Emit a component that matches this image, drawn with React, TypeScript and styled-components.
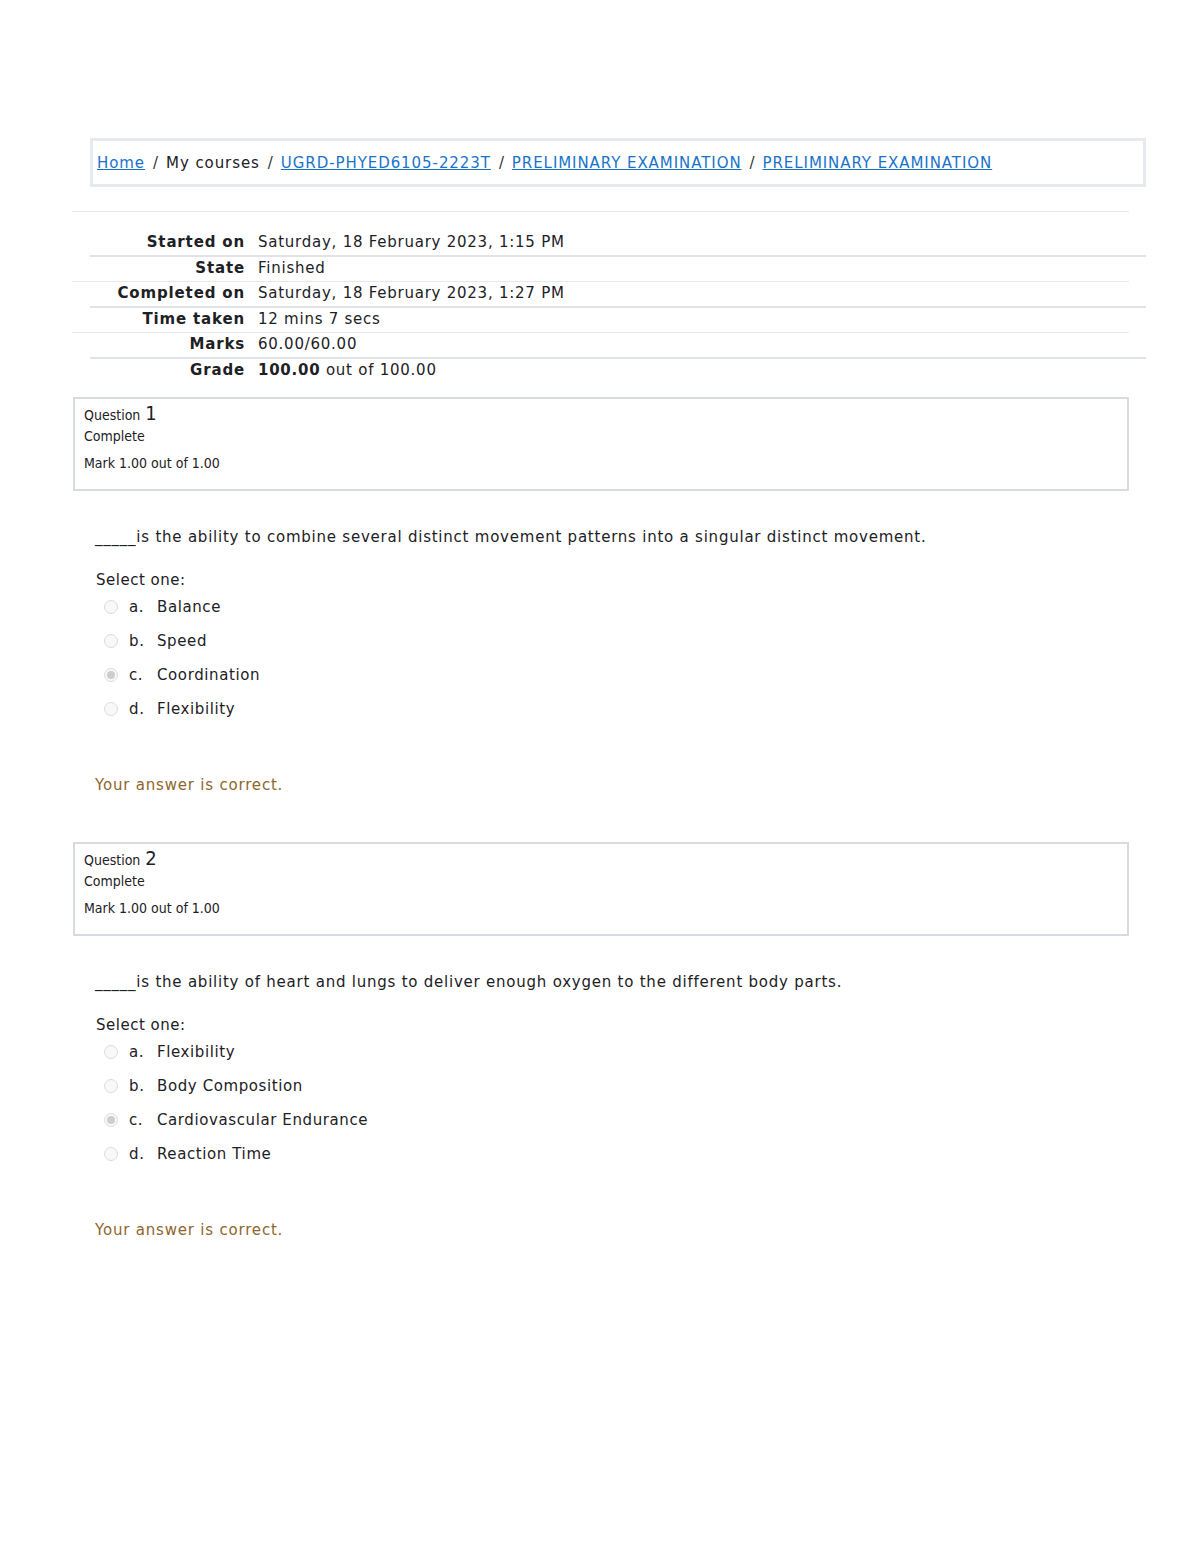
import React from "react";
import styled, { createGlobalStyle } from "styled-components";

const Global = createGlobalStyle`
  html, body { margin: 0; padding: 0; background: #fff; }
  body { font-family: "DejaVu Sans", "Liberation Sans", sans-serif; color: #1d2125; }
`;

const Page = styled.div`
  width: 1057px;
  margin-left: 72px;
  padding-top: 138px;
  padding-bottom: 200px;
`;

const Shifted = styled.div`
  margin-left: 18px;
  margin-right: -17px;
`;

const Crumbs = styled.nav`
  border: 3px solid #e6e9ed;
  height: 43px;
  display: flex;
  align-items: center;
  padding-left: 4px;
  font-size: 15px;
  letter-spacing: 0.93px;
  white-space: nowrap;
`;

const CrumbLink = styled.a`
  color: #1a73c9;
  text-decoration: underline;
`;

const Sep = styled.span`
  color: #333;
  margin: 0 7px 0 8px;
`;

const Rule = styled.div`
  height: 1px;
  background: #e4e7eb;
  margin-top: 24px;
`;

const Summary = styled.div`
  margin-top: 19px;
  font-size: 15px;
`;

const Row = styled.div`
  display: grid;
  grid-template-columns: 173px 1fr;
  column-gap: 13px;
  line-height: 20px;
  padding: 1px 0 3px;
`;

const Divider = styled.div<{ $wide?: boolean }>`
  height: ${(p) => (p.$wide ? "2px" : "1px")};
  background: ${(p) => (p.$wide ? "#e0e3e7" : "#e6e9ec")};
  margin-left: ${(p) => (p.$wide ? "18px" : "0")};
  margin-right: ${(p) => (p.$wide ? "-17px" : "0")};
`;

const Label = styled.div`
  font-weight: bold;
  text-align: right;
  letter-spacing: 0.85px;
  color: #1d2125;
`;

const Value = styled.div`
  color: #1d2125;
  letter-spacing: 0.75px;
`;

const InfoBox = styled.div<{ $top: number }>`
  margin-top: ${(p) => p.$top}px;
  margin-left: 1px;
  height: 94px;
  box-sizing: border-box;
  border: 2px solid #d7dade;
  padding: 3px 9px 0;
  font-family: "DejaVu Sans Condensed", "DejaVu Sans", sans-serif;
  font-size: 14px;
  color: #1d2125;
`;

const QTitle = styled.div`
  line-height: 22px;
  height: 22px;
`;

const QNum = styled.span`
  font-size: 20px;
  margin-left: 5px;
`;

const InfoLine = styled.div<{ $gap?: number }>`
  line-height: 18px;
  margin-top: ${(p) => p.$gap ?? 0}px;
`;

const QText = styled.div`
  margin-top: 36px;
  margin-left: 23px;
  font-size: 15px;
  letter-spacing: 0.77px;
  line-height: 20px;
  color: #1d2125;
`;

const Prompt = styled.div`
  margin-top: 23px;
  margin-left: 24px;
  font-size: 15px;
  letter-spacing: 0.5px;
  line-height: 20px;
`;

const Options = styled.div`
  margin-left: 32px;
`;

const Option = styled.div`
  height: 34px;
  display: flex;
  align-items: center;
  font-size: 15px;
  letter-spacing: 0.6px;
`;

const Radio = styled.span<{ $checked?: boolean }>`
  width: 14px;
  height: 14px;
  border-radius: 50%;
  border: 1px solid #dcdcdc;
  background: #f8f8f8;
  box-sizing: border-box;
  display: inline-flex;
  align-items: center;
  justify-content: center;
  margin-right: 11px;
  &::after {
    content: "";
    width: 8px;
    height: 8px;
    border-radius: 50%;
    background: ${(p) => (p.$checked ? "#cdcdcd" : "transparent")};
  }
`;

const Letter = styled.span`
  width: 28px;
  color: #1d2125;
`;

const Feedback = styled.div`
  margin-top: 49px;
  margin-left: 23px;
  font-size: 15px;
  letter-spacing: 0.8px;
  line-height: 20px;
  color: #8e662e;
`;

type Q = {
  num: number;
  text: string;
  options: string[];
  checked: number;
};

const questions: Q[] = [
  {
    num: 1,
    text: "_____is the ability to combine several distinct movement patterns into a singular distinct movement.",
    options: ["Balance", "Speed", "Coordination", "Flexibility"],
    checked: 2,
  },
  {
    num: 2,
    text: "_____is the ability of heart and lungs to deliver enough oxygen to the different body parts.",
    options: ["Flexibility", "Body Composition", "Cardiovascular Endurance", "Reaction Time"],
    checked: 2,
  },
];

const rows: { label: string; value: React.ReactNode }[] = [
  { label: "Started on", value: "Saturday, 18 February 2023, 1:15 PM" },
  { label: "State", value: "Finished" },
  { label: "Completed on", value: "Saturday, 18 February 2023, 1:27 PM" },
  { label: "Time taken", value: "12 mins 7 secs" },
  { label: "Marks", value: "60.00/60.00" },
  {
    label: "Grade",
    value: (
      <>
        <b>100.00</b> out of 100.00
      </>
    ),
  },
];

export default function App() {
  return (
    <>
      <Global />
      <Page>
        <Shifted>
          <Crumbs>
            <CrumbLink href="#">Home</CrumbLink>
            <Sep>/</Sep>
            <span>My courses</span>
            <Sep>/</Sep>
            <CrumbLink href="#">UGRD-PHYED6105-2223T</CrumbLink>
            <Sep>/</Sep>
            <CrumbLink href="#">PRELIMINARY EXAMINATION</CrumbLink>
            <Sep>/</Sep>
            <CrumbLink href="#">PRELIMINARY EXAMINATION</CrumbLink>
          </Crumbs>
        </Shifted>
        <Rule />
        <Summary>
          {rows.map((r, i) => (
            <React.Fragment key={r.label}>
              <Row>
                <Label>{r.label}</Label>
                <Value>{r.value}</Value>
              </Row>
              {i < rows.length - 1 && <Divider $wide={i % 2 === 0} />}
            </React.Fragment>
          ))}
        </Summary>
        {questions.map((q, qi) => (
          <div key={q.num}>
            <InfoBox $top={qi === 0 ? 14 : 47}>
              <QTitle>
                Question<QNum>{q.num}</QNum>
              </QTitle>
              <InfoLine $gap={3}>Complete</InfoLine>
              <InfoLine $gap={9}>Mark 1.00 out of 1.00</InfoLine>
            </InfoBox>
            <QText>{q.text}</QText>
            <Prompt>Select one:</Prompt>
            <Options>
              {q.options.map((o, i) => (
                <Option key={o}>
                  <Radio $checked={i === q.checked} />
                  <Letter>{String.fromCharCode(97 + i)}.</Letter>
                  <span>{o}</span>
                </Option>
              ))}
            </Options>
            <Feedback>Your answer is correct.</Feedback>
          </div>
        ))}
      </Page>
    </>
  );
}
